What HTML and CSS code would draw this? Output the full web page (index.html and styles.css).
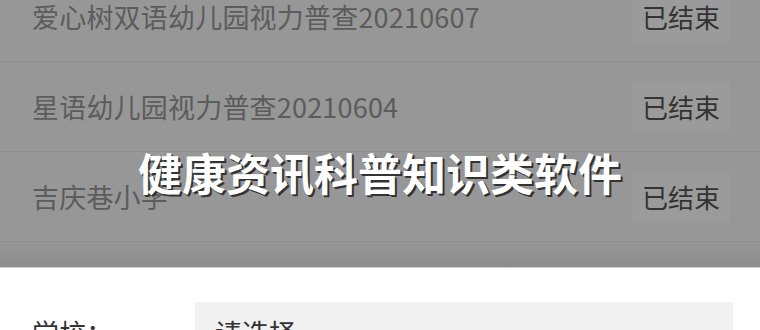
FILE: index.html
```html
<!DOCTYPE html>
<html lang="zh">
<head>
<meta charset="utf-8">
<link rel="stylesheet" href="styles.css">
</head>
<body>
<div class="page">
  <div class="list">
    <div class="row">
      <span class="name">爱心树双语幼儿园视力普查20210607</span>
      <span class="badge">已结束</span>
    </div>
    <div class="row">
      <span class="name">星语幼儿园视力普查20210604</span>
      <span class="badge">已结束</span>
    </div>
    <div class="row">
      <span class="name">吉庆巷小学</span>
      <span class="badge">已结束</span>
    </div>
    <div class="shade"></div>
  </div>
  <div class="sheet">
    <div class="field">
      <span class="label">学校：</span>
      <div class="select">请选择</div>
    </div>
  </div>
  <div class="title">健康资讯科普知识类软件</div>
</div>
</body>
</html>
```

FILE: styles.css
```css
* { box-sizing: border-box; }
html, body { margin: 0; padding: 0; }
body {
  width: 760px;
  height: 330px;
  overflow: hidden;
  font-family: "Noto Sans CJK SC", "Noto Sans", sans-serif;
  background: #fff;
}
.page {
  position: relative;
  width: 760px;
  height: 330px;
  overflow: hidden;
}
.list {
  background: #979797;
  margin-top: -28px;
}
.row {
  height: 90px;
  display: flex;
  align-items: center;
  justify-content: space-between;
  padding: 0 30px 0 32px;
  border-bottom: 1px solid #8f8f8f;
}
.row:last-of-type { border-bottom: none; }
.name {
  font-size: 27px;
  color: #5c5c5c;
  letter-spacing: 0.2px;
}
.badge {
  background: #9b9b9b;
  color: #333;
  font-size: 26px;
  height: 48px;
  width: 98px;
  display: flex;
  align-items: center;
  justify-content: center;
}
.shade {
  height: 26px;
  background: linear-gradient(#979797, #8c8c8c);
  border-bottom: 1px solid #cfcfcf;
}
.sheet {
  background: #fff;
  padding: 34px 27px 0 32px;
}
.field {
  display: flex;
  align-items: flex-start;
}
.label {
  width: 163px;
  font-size: 27px;
  color: #333;
  padding-top: 12px;
  line-height: 1.4;
}
.select {
  flex: 1;
  height: 60px;
  background: #f1f1f1;
  font-size: 27px;
  color: #333;
  padding: 12px 20px;
  line-height: 1.4;
}
.title {
  position: absolute;
  left: 0;
  right: 0;
  top: 140px;
  text-align: center;
  font-size: 44px;
  font-weight: 700;
  color: #fff;
  text-shadow: 2px 2px 0 #333, 1px 1px 0 #555;
}
```
